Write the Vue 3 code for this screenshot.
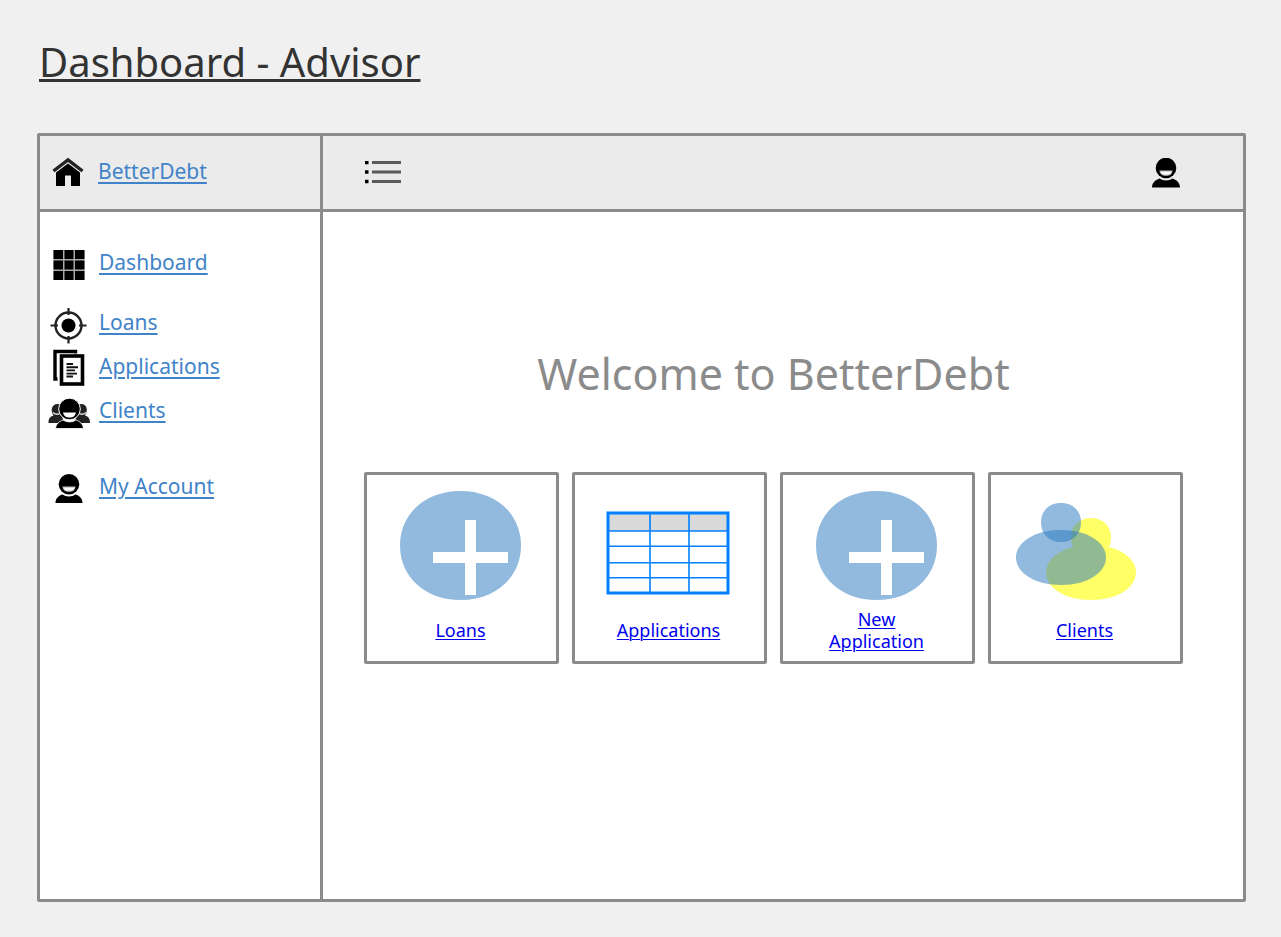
<script setup>
const groups = [
  [{ label: 'Dashboard', icon: 'grid' }],
  [
    { label: 'Loans', icon: 'target' },
    { label: 'Applications', icon: 'docs' },
    { label: 'Clients', icon: 'group' },
  ],
  [{ label: 'My Account', icon: 'user' }],
]
const cards = [
  { label: 'Loans', art: 'plus' },
  { label: 'Applications', art: 'table' },
  { label: 'New Application', art: 'plus' },
  { label: 'Clients', art: 'people' },
]
</script>

<template>
  <div class="page">
    <h1 class="title">Dashboard - Advisor</h1>
    <div class="frame">
      <header class="brand">
        <svg class="icon" viewBox="0 0 40 40" aria-hidden="true">
          <path d="M5.500 18L20 7L34.500 18" fill="none" stroke="#222" stroke-width="3.400" />
          <path d="M8 19.500L20 10.500L32 19.500V33H23V22.500H17V33H8Z" />
        </svg>
        <a href="#home">BetterDebt</a>
      </header>

      <div class="toolbar">
        <button type="button" class="tool" aria-label="Toggle menu">
          <svg width="36" height="24" viewBox="0 0 36 24" aria-hidden="true">
            <path d="M0 1.500H3.500M0 11H3.500M0 20.500H3.500" stroke="#000" stroke-width="3.400" />
            <path d="M7 1.500H36M7 11H36M7 20.500H36" stroke="#5a5a5a" stroke-width="2.800" />
          </svg>
        </button>
        <button type="button" class="tool" aria-label="Account">
          <svg width="28" height="30" viewBox="0 0 28 30" aria-hidden="true">
            <circle cx="14" cy="10" r="10.300" />
            <path d="M7.500 12.500H20.500C20 16.500 17.500 17.800 14 17.800S8 16.500 7.500 12.500Z" fill="#c4c4c4" />
            <path d="M8.500 13.700H19.500C18.500 16 17 16.600 14 16.600S9.500 16 8.500 13.700Z" fill="#fff" />
            <path d="M0 29.500C0 25 3 22 7.500 20.500C11 23 17 23 20.500 20.500C25 22 28 25 28 29.500Z" />
          </svg>
        </button>
      </div>

      <nav class="side" aria-label="Main">
        <ul v-for="(group, i) in groups" :key="i">
          <li v-for="item in group" :key="item.label">
            <svg class="icon" viewBox="0 0 40 40" aria-hidden="true">
              <g v-if="item.icon === 'grid'">
                <rect x="4.500" y="6" width="31" height="30" fill="#aaa" />
                <path d="M4.500 6h9.500v9h-9.500zM15.500 6h9v9h-9zM26 6h9.500v9H26zM4.500 16.500h9.500v9h-9.500zM15.500 16.500h9v9h-9zM26 16.500h9.500v9H26zM4.500 27h9.500v9h-9.500zM15.500 27h9v9h-9zM26 27h9.500v9H26z" />
              </g>
              <g v-else-if="item.icon === 'target'">
                <circle cx="19.500" cy="21.500" r="13" fill="none" stroke="#222" stroke-width="2.400" />
                <circle cx="19.500" cy="21.500" r="7" />
                <path d="M19.500 4V11M19.500 32V39.500M1.500 21.500H9M30 21.500H37.500" stroke="#222" stroke-width="2.200" />
              </g>
              <g v-else-if="item.icon === 'docs'" fill="none">
                <path d="M8.500 31H6V3.500H26.500V5.500" stroke="#000" stroke-width="3.400" />
                <rect x="12.500" y="8" width="21" height="28" stroke="#000" stroke-width="3.600" />
                <path d="M17.500 16H24M17.500 19.200H29M17.500 22.400H26M17.500 25.600H28M17.500 28.500H24" stroke="#111" stroke-width="1.900" />
              </g>
              <g v-else-if="item.icon === 'group'">
                <path d="M-.5 31C-.5 26.500 1 24.500 4.500 23.500C1 18 3 12 8.500 12C15 12 15 20 12.500 23L15 31Z" fill="#222" />
                <path d="M41 31C41 26.500 39.500 24.500 36 23.500C39.500 18 38 12 32 12C25.500 12 25.500 20 28 23L25.500 31Z" fill="#222" />
                <path d="M4 20.500Q8 24 12 20.500M29 20.500Q33 24 37 20.500" fill="none" stroke="#ddd" stroke-width="1.600" />
                <circle cx="20.500" cy="17" r="10.800" stroke="#fff" stroke-width="1" />
                <path d="M6.500 36.500C7 32 10 29.500 14 28C18 30.500 23 30.500 27 28C31 29.500 34 32 34.500 36.500Z" stroke="#fff" stroke-width=".8" />
                <path d="M14 20.500H27C26 24.500 24 25.500 20.500 25.500S15 24.500 14 20.500Z" fill="#fff" />
              </g>
              <g v-else>
                <circle cx="20" cy="16.200" r="10.300" />
                <path d="M13.500 18.500H26.500C26 22.500 23.500 23.800 20 23.800S14 22.500 13.500 18.500Z" fill="#c4c4c4" />
                <path d="M14.500 19.700H25.500C24.500 22 23 22.600 20 22.600S15.500 22 14.500 19.700Z" fill="#fff" />
                <path d="M6.500 35C6.500 30.500 9 28 13.500 26.500C17 29 23 29 26.500 26.500C31 28 33.500 30.500 33.500 35Z" />
              </g>
            </svg>
            <a href="#section">{{ item.label }}</a>
          </li>
        </ul>
      </nav>

      <main class="content">
        <h2 class="welcome">Welcome to BetterDebt</h2>
        <div class="cards">
          <section v-for="card in cards" :key="card.label" class="card">
            <svg class="art" viewBox="0 0 141 109" aria-hidden="true">
              <g v-if="card.art === 'plus'">
                <path d="M69.500 0C105 0 130 23 130 54.500S105 109 69.500 109S9 86 9 54.500S34 0 69.500 0Z" fill="#91bade" />
                <path d="M74 29H85V61H117V72H85V104H74V72H42V61H74Z" fill="#fff" />
              </g>
              <g v-else-if="card.art === 'table'" stroke="#0080ff" fill="none">
                <rect x="9" y="22" width="120" height="18" fill="#dadada" stroke="none" />
                <path d="M9 40H129M9 55.300H129M9 71.700H129M9 86.700H129M51 22V102M90 22V102" stroke-width="1.600" />
                <rect x="9" y="22" width="120" height="80" stroke-width="3" />
              </g>
              <g v-else>
                <g fill="#ffff66">
                  <path d="M76 27C88 27 96 35 96 46.500S88 66 76 66S56 58 56 46.500S64 27 76 27Z" />
                  <path d="M76 54C102 54 121 66 121 81.500S102 109 76 109S31 97 31 81.500S50 54 76 54Z" />
                </g>
                <g fill="#2375bd" fill-opacity=".5">
                  <path d="M46 12C58 12 66 20 66 31.500S58 51 46 51S26 43 26 31.500S34 12 46 12Z" />
                  <path d="M46 39C72 39 91 51 91 66.500S72 94 46 94S1 82 1 66.500S20 39 46 39Z" />
                </g>
              </g>
            </svg>
            <div class="label"><a href="#open">{{ card.label }}</a></div>
          </section>
        </div>
      </main>
    </div>
  </div>
</template>

<style>
body {
  background: #f0f0f0;
}
</style>

<style scoped>
.page {
  box-sizing: border-box;
  min-height: 100vh;
  padding: 32px 35px 35px 37px;
  display: flex;
  flex-direction: column;
  font-family: "Noto Sans", "Open Sans", sans-serif;
}
.title {
  margin: 0 2px 41px;
  font-size: 40px;
  line-height: 60px;
  font-weight: 400;
  color: #333;
  text-decoration: underline;
  text-decoration-thickness: 3px;
  text-underline-offset: 2px;
  text-decoration-skip-ink: none;
}
.frame {
  flex: 1;
  display: grid;
  grid-template-columns: 280px 1fr;
  grid-template-rows: 73px 1fr;
  gap: 3px;
  border: 3px solid #8b8b8b;
  border-radius: 2px;
  background: #8b8b8b;
}
.brand,
.toolbar {
  display: flex;
  align-items: center;
  background: #ebebeb;
}
.brand {
  gap: 10px;
  padding-left: 8px;
}
.toolbar {
  justify-content: space-between;
  padding: 0 63px 0 42px;
}
.tool {
  display: flex;
  padding: 0;
  border: 0;
  background: none;
}
.icon {
  width: 40px;
  height: 40px;
  flex: none;
  overflow: visible;
}
.brand a,
.side a {
  font-size: 21px;
  line-height: 28px;
  padding-bottom: 4px;
  color: #4183c8;
  text-decoration-thickness: 2px;
  text-underline-offset: 3px;
}
.side {
  display: flex;
  flex-direction: column;
  padding: 30px 0 0 9px;
  background: #fff;
}
.side ul {
  margin: 0;
  padding: 0;
  list-style: none;
}
.side ul:nth-child(2) {
  margin: 16px 0 32px;
}
.side li {
  display: flex;
  align-items: center;
  gap: 10px;
  height: 44px;
}
.content {
  padding: 130px 60px 40px 41px;
  background: #fff;
}
.welcome {
  margin: 0 0 66px;
  font-size: 43px;
  line-height: 64px;
  font-weight: 400;
  text-align: center;
  color: #8b8b8b;
}
.cards {
  display: grid;
  grid-template-columns: repeat(4, 1fr);
  gap: 13px;
}
.card {
  box-sizing: border-box;
  height: 192px;
  padding-top: 16px;
  border: 3px solid #8b8b8b;
  border-radius: 2px;
  display: flex;
  flex-direction: column;
  align-items: center;
}
.art {
  width: 141px;
  height: 109px;
  flex: none;
}
.label {
  flex: 1;
  display: flex;
  align-items: center;
  max-width: 120px;
  padding: 0 2px 2px 0;
  font-size: 18px;
  line-height: 22px;
  text-align: center;
}
.label a {
  color: #0000ee;
  text-decoration-thickness: 1px;
  text-underline-offset: 2px;
}
</style>
